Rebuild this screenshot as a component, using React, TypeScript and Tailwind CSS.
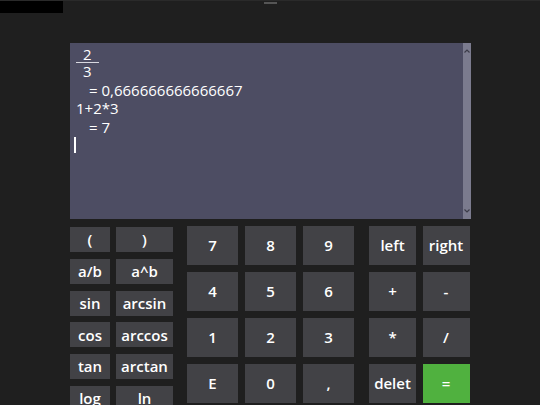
import React from 'react';

const FN_KEYS = ['(', ')', 'a/b', 'a^b', 'sin', 'arcsin', 'cos', 'arccos', 'tan', 'arctan', 'log', 'ln'];
const NUM_KEYS = ['7', '8', '9', '4', '5', '6', '1', '2', '3', 'E', '0', ','];
const OP_KEYS = ['left', 'right', '+', '-', '*', '/', 'delet', '='];

const font = { fontFamily: '"Open Sans", "Noto Sans", sans-serif' };

function Key({ label, className = '' }: { label: string; className?: string }) {
  const green = label === '=';
  return (
    <button
      className={`flex items-center justify-center text-[15px] font-semibold text-white ${
        green ? 'bg-[#50b13f]' : 'bg-[#424246]'
      } ${className}`}
    >
      {label}
    </button>
  );
}

function Chevron({ up }: { up?: boolean }) {
  return (
    <svg width="6" height="4" viewBox="0 0 6 4" className="text-[#3c3c48]">
      <path
        d={up ? 'M0.5 3.5 L3 1 L5.5 3.5' : 'M0.5 0.5 L3 3 L5.5 0.5'}
        fill="none"
        stroke="currentColor"
        strokeWidth="1.2"
      />
    </svg>
  );
}

export default function App() {
  return (
    <div className="relative h-[405px] w-[540px] overflow-hidden border-t border-[#2a2a2a] bg-[#1f1f1f]" style={font}>
      {/* window chrome */}
      <div className="absolute left-0 top-0 h-[12px] w-[63px] bg-black" />
      <div className="absolute left-[264px] top-[1px] h-[2px] w-[13px] bg-[#555]" />

      <div className="ml-[70px] mt-[42px] w-[401px]">
        {/* output area */}
        <div className="flex h-[176px] bg-[#4d4d63] text-[15px] text-white">
          <div className="flex-1 pl-[6px]">
            <div className="inline-flex flex-col">
              <span className="h-[16px] px-[7px] text-center leading-[16px]">2</span>
              <div className="h-px bg-[#d8d8e0]" />
              <span className="h-[17px] px-[7px] text-center leading-[17px]">3</span>
            </div>
            <div className="mt-[1px] pl-[13px] leading-[18.4px]">= 0,666666666666667</div>
            <div className="leading-[18.4px]">1+2*3</div>
            <div className="pl-[13px] leading-[18.4px]">= 7</div>
            <div className="ml-[-2px] mt-[1px] h-[16px] w-[1.5px] bg-white" />
          </div>
          <div className="flex w-[8px] flex-col items-center justify-between bg-[#7b7b8e] py-[6px]">
            <Chevron up />
            <Chevron />
          </div>
        </div>

        {/* keypad */}
        <div className="mt-[7px] flex items-start">
          <div className="mt-[1px] grid grid-cols-[40px_57px] content-start gap-x-[6px] gap-y-[6.8px]">
            {FN_KEYS.map((k) => (
              <Key key={k} label={k} className="h-[25px]" />
            ))}
          </div>
          <div className="ml-[14px] grid grid-cols-[51px_51px_51px] content-start gap-[7px]">
            {NUM_KEYS.map((k) => (
              <Key key={k} label={k} className="h-[39px]" />
            ))}
          </div>
          <div className="ml-[15px] grid grid-cols-[47px_47px] content-start gap-x-[6.5px] gap-y-[7px]">
            {OP_KEYS.map((k) => (
              <Key key={k} label={k} className="h-[39px]" />
            ))}
          </div>
        </div>
      </div>
    </div>
  );
}
